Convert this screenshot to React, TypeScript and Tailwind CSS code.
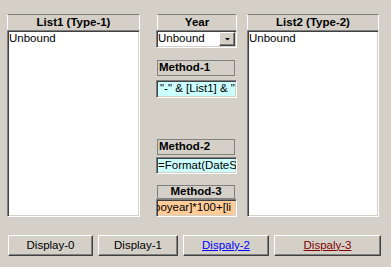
import React from "react";

const sunken =
  "border border-t-[#808080] border-l-[#808080] border-b-white border-r-white shadow-[inset_1px_1px_0_#404040,inset_-1px_-1px_0_#d4d0c8]";
const raised =
  "border border-t-white border-l-white border-b-[#404040] border-r-[#404040] shadow-[inset_-1px_-1px_0_#808080]";

function Header({ text, className = "" }: { text: string; className?: string }) {
  return (
    <div
      className={`h-[16px] border-t border-t-[#808080] border-x border-x-white flex items-center justify-center font-bold text-[11.5px] leading-none text-black ${className}`}
    >
      {text}
    </div>
  );
}

function Label({ text, center = false, className = "" }: { text: string; center?: boolean; className?: string }) {
  return (
    <div
      className={`border border-[#808080] flex items-center font-bold text-[11.5px] leading-none text-black ${
        center ? "justify-center" : "pl-[1px]"
      } ${className}`}
    >
      {text}
    </div>
  );
}

function Btn({ text, w, color }: { text: string; w: string; color?: string }) {
  return (
    <div className={`${w} h-[21px] ${raised} flex items-center justify-center text-[11.5px] leading-none`}>
      <span className={color ? `${color} underline` : "text-black"}>{text}</span>
    </div>
  );
}

export default function App() {
  return (
    <div
      className="w-[391px] h-[267px] bg-[#d4d0c8] pt-[14px] pl-[7px] overflow-hidden"
      style={{ fontFamily: '"Liberation Sans", Arial, sans-serif' }}
    >
      <div className="flex items-start">
        {/* Left list */}
        <div className="w-[133px] flex flex-col">
          <Header text="List1 (Type-1)" />
          <div className={`h-[187px] bg-white ${sunken} pl-[1px] pt-[1px] text-[11.5px] leading-[13px] text-black`}>
            Unbound
          </div>
        </div>

        {/* Middle column */}
        <div className="w-[81px] ml-[16px] flex flex-col">
          <Header text="Year" className="ml-[1px]" />
          <div className={`h-[18px] bg-white ${sunken} flex items-center`}>
            <span className="flex-1 pl-[1px] text-[11.5px] leading-none text-black">Unbound</span>
            <div className={`w-[16px] h-[14px] mr-[1px] bg-[#d4d0c8] ${raised} flex items-center justify-center`}>
              <svg width="7" height="4" viewBox="0 0 7 4">
                <path d="M1 1h5L3.5 3.5z" fill="#000" />
              </svg>
            </div>
          </div>

          <Label text="Method-1" className="h-[16px] mt-[12px] ml-[1px] mr-[2px]" />
          <div className={`mt-[4px] h-[18px] bg-[#ccffff] ${sunken} flex items-center pl-[3px] overflow-hidden whitespace-nowrap text-[11.5px] leading-none text-black`}>
            "-" &amp; [List1] &amp; "
          </div>

          <Label text="Method-2" className="h-[16px] mt-[41px] ml-[1px] mr-[2px]" />
          <div className={`mt-[2px] h-[17px] bg-[#ccffff] ${sunken} flex items-center pl-[1px] overflow-hidden whitespace-nowrap text-[11.5px] leading-none text-black`}>
            =Format(DateS
          </div>

          <Label text="Method-3" center className="h-[14px] mt-[11px] ml-[1px] mr-[2px]" />
          <div className={`h-[18px] bg-[#ffcc99] ${sunken} flex items-center overflow-hidden whitespace-nowrap text-[11.5px] leading-none text-black`}>
            <span className="ml-[-3px]">poyear]*100+[li</span>
          </div>
        </div>

        {/* Right list */}
        <div className="w-[132px] ml-[10px] flex flex-col">
          <Header text="List2 (Type-2)" />
          <div className={`h-[187px] bg-white ${sunken} pl-[1px] pt-[1px] text-[11.5px] leading-[13px] text-black`}>
            Unbound
          </div>
        </div>
      </div>

      <div className="mt-[18px] ml-[1px] flex gap-[5px]">
        <Btn text="Display-0" w="w-[85px]" />
        <Btn text="Display-1" w="w-[80px]" />
        <Btn text="Dispaly-2" w="w-[86px]" color="text-[#0000ff]" />
        <Btn text="Dispaly-3" w="w-[107px]" color="text-[#800000]" />
      </div>
    </div>
  );
}
